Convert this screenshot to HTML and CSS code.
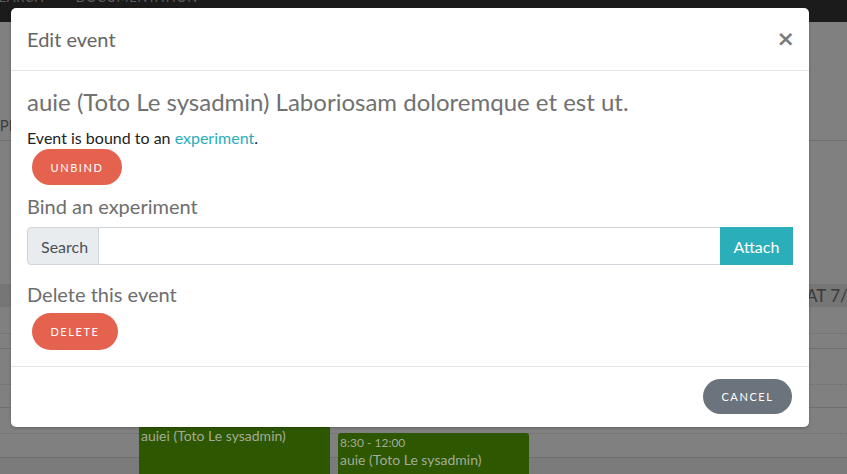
FILE: index.html
```html
<!DOCTYPE html>
<html lang="en">
<head>
<meta charset="utf-8">
<title>Edit event</title>
<link rel="stylesheet" href="styles.css">
</head>
<body>
<div class="page">
  <header class="topnav">
    <span class="navlink first">Search</span>
    <span class="navlink">Documentation</span>
  </header>
  <div class="toolbar"><span class="tb-label">Display</span></div>
  <div class="spacer"></div>
  <div class="dayhead"><span>Sat 7/22</span></div>
  <div class="slot dotted h27"></div>
  <div class="slot solid h15"></div>
  <div class="slot dotted h36"></div>
  <div class="slot solid h23"></div>
  <div class="slot dotted h26"></div>
  <div class="slot solid h24"></div>
  <div class="rest"></div>

  <div class="event e1">
    <div class="ev-time">8:00 - 12:00</div>
    <div class="ev-title">auiei (Toto Le sysadmin)</div>
  </div>
  <div class="event e2">
    <div class="ev-time">8:30 - 12:00</div>
    <div class="ev-title">auie (Toto Le sysadmin)</div>
  </div>
</div>

<div class="modal">
  <div class="modal-header">
    <h5 class="modal-title">Edit event</h5>
    <button class="close" type="button">&times;</button>
  </div>
  <div class="modal-body">
    <h4 class="event-title">auie (Toto Le sysadmin) Laboriosam doloremque et est ut.</h4>
    <p class="bound">Event is bound to an <a class="link" href="#">experiment</a>.</p>
    <button class="pill danger unbind" type="button">Unbind</button>
    <h5 class="section">Bind an experiment</h5>
    <div class="input-group">
      <span class="addon">Search</span>
      <input class="field" type="text">
      <button class="attach" type="button">Attach</button>
    </div>
    <h5 class="section del-title">Delete this event</h5>
    <button class="pill danger delete" type="button">Delete</button>
  </div>
  <div class="modal-footer">
    <button class="pill secondary" type="button">Cancel</button>
  </div>
</div>
</body>
</html>
```
FILE: styles.css
```css
* { box-sizing: border-box; }
html, body { margin: 0; padding: 0; }
body {
  font-family: Lato, "Open Sans", "DejaVu Sans", sans-serif;
  background: #808080;
  width: 847px;
  height: 474px;
  overflow: hidden;
  position: relative;
}

/* ---------- background page ---------- */
.page { position: relative; height: 474px; }
.topnav {
  height: 22px;
  background: #1b1b1b;
  display: flex;
  gap: 31px;
  overflow: hidden;
  white-space: nowrap;
}
.navlink {
  color: #5e5e5e;
  font-size: 13px;
  line-height: 20px;
  letter-spacing: 0.6px;
  text-transform: uppercase;
  margin-top: -13px;
}
.navlink.first { margin-left: -9px; }

.toolbar {
  height: 119px;
  border-bottom: 1px solid #6f6f6f;
  display: flex;
  align-items: flex-end;
  padding-bottom: 6px;
  white-space: nowrap;
  overflow: hidden;
}
.tb-label {
  color: #3c3c3c;
  font-size: 15px;
  text-transform: uppercase;
  margin-left: -24px;
}
.spacer { height: 143px; }
.dayhead {
  height: 23px;
  background: #767676;
  color: #3a3a3a;
  font-size: 17px;
  line-height: 23px;
  padding-left: 797px;
  white-space: nowrap;
  overflow: hidden;
  text-transform: uppercase;
}
.slot { border-bottom: 1px solid #707070; }
.slot.dotted { border-bottom: 1px dotted #6c6c6c; }
.h27 { height: 27px; }
.h15 { height: 15px; }
.h36 { height: 36px; }
.h23 { height: 23px; }
.h26 { height: 26px; }
.h24 { height: 24px; }
.rest { height: 20px; background: #7b7b7b; }

.event {
  position: absolute;
  width: 191px;
  background: #2d5700;
  color: #a3ab9b;
  border-radius: 3px 3px 0 0;
  padding: 0 2px;
  white-space: nowrap;
  overflow: hidden;
}
.e1 { left: 139px; top: 392px; height: 82px; padding-top: 0; }
.e2 { left: 338px; top: 433px; height: 41px; padding-top: 2px; }
.ev-time { font-size: 12px; line-height: 15px; height: 15px; }
.e1 .ev-time { height: 34px; }
.ev-title { font-size: 14px; line-height: 20px; }

/* ---------- modal ---------- */
.modal {
  position: absolute;
  left: 11px;
  top: 8px;
  width: 798px;
  background: #fff;
  border-radius: 5px;
  box-shadow: 0 1px 3px rgba(0,0,0,0.25);
  display: flex;
  flex-direction: column;
}
.modal-header {
  display: flex;
  justify-content: space-between;
  align-items: center;
  padding: 16px;
  border-bottom: 1px solid #e4e4e4;
}
.modal-title {
  margin: 0;
  font-size: 20px;
  line-height: 30px;
  font-weight: 400;
  color: #656565;
}
.close {
  border: 0;
  background: transparent;
  padding: 0;
  margin-right: -2px;
  font-family: "DejaVu Sans", sans-serif;
  font-size: 22px;
  font-weight: 700;
  line-height: 24px;
  color: #7a7a7a;
}
.modal-body {
  padding: 16px;
  display: flex;
  flex-direction: column;
  align-items: flex-start;
}
.event-title {
  margin: 0 0 10px;
  font-size: 24px;
  line-height: 30px;
  font-weight: 400;
  color: #717171;
}
.bound {
  margin: 0;
  font-size: 16px;
  line-height: 22px;
  color: #222;
}
.link { color: #2aadbb; text-decoration: none; }
.pill {
  border: 0;
  border-radius: 20px;
  color: #fff;
  font-family: Lato, "Open Sans", sans-serif;
  font-size: 11px;
  letter-spacing: 1.6px;
  text-transform: uppercase;
  font-weight: 400;
  padding: 0;
}
.danger { background: #e5624e; }
.unbind { width: 90px; height: 36px; margin-left: 5px; }
.delete { width: 86px; height: 37px; margin-left: 5px; }
.secondary { background: #6b737c; width: 89px; height: 35px; }
.section {
  margin: 9px 0 9px;
  font-size: 20px;
  line-height: 24px;
  font-weight: 400;
  color: #6e6e6e;
}
.del-title { margin-top: 17px; margin-bottom: 7px; }
.input-group {
  display: flex;
  width: 100%;
  height: 38px;
}
.addon {
  display: flex;
  align-items: center;
  width: 72px;
  padding-left: 13px;
  background: #e9ecef;
  border: 1px solid #ced4da;
  border-radius: 4px 0 0 4px;
  font-size: 16px;
  color: #495057;
}
.field {
  flex: 1;
  border: 1px solid #ced4da;
  border-left: 0;
  border-right: 0;
  margin: 0;
  outline: none;
  font-size: 16px;
}
.attach {
  width: 73px;
  border: 0;
  background: #2aaeba;
  color: #fff;
  font-family: Lato, "Open Sans", sans-serif;
  font-size: 16px;
  padding: 0;
}
.modal-footer {
  display: flex;
  justify-content: flex-end;
  padding: 12px 17px 13px 12px;
  border-top: 1px solid #e4e4e4;
}
```
